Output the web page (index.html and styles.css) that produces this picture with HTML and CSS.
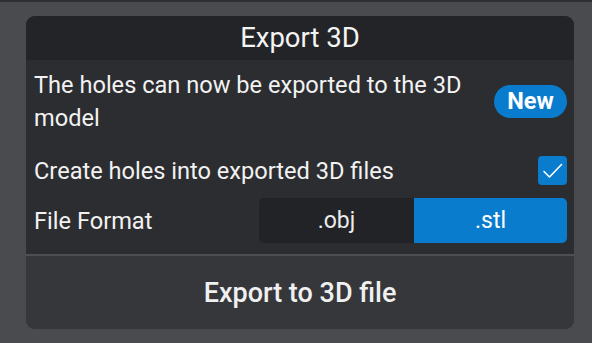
FILE: index.html
```html
<!DOCTYPE html>
<html>
<head>
<meta charset="utf-8">
<link rel="stylesheet" href="styles.css">
</head>
<body>
<div class="screen">
  <div class="dialog">
    <div class="header">Export 3D</div>
    <div class="content">
      <div class="row notice">
        <div class="notice-text">The holes can now be exported to the 3D model</div>
        <span class="badge">New</span>
      </div>
      <div class="row check-row">
        <div class="label">Create holes into exported 3D files</div>
        <span class="checkbox">
          <svg width="29" height="29" viewBox="0 0 29 29"><path d="M6 15.5 L11.5 21 L23.5 8.5" fill="none" stroke="#fff" stroke-width="1.6" stroke-linecap="round" stroke-linejoin="round"/></svg>
        </span>
      </div>
      <div class="row format-row">
        <div class="label">File Format</div>
        <div class="segmented">
          <span class="seg">.obj</span>
          <span class="seg active">.stl</span>
        </div>
      </div>
    </div>
    <div class="footer">Export to 3D file</div>
  </div>
</div>
</body>
</html>
```
FILE: styles.css
```css
html, body {
  margin: 0;
  padding: 0;
}
body {
  width: 592px;
  height: 343px;
  overflow: hidden;
  background: #4a4b4f;
  font-family: Roboto, "Noto Sans", sans-serif;
  color: #f2f2f2;
}
.screen {
  height: 343px;
  padding: 14px 18px 0 26px;
  box-sizing: border-box;
  border-top: 2px solid #2e2f33;
}
.dialog {
  width: 548px;
  height: 313px;
  border-radius: 9px;
  overflow: hidden;
  background: #2c2d31;
  display: flex;
  flex-direction: column;
}
.header {
  height: 44px;
  flex: none;
  background: #232427;
  font-size: 27.5px;
  line-height: 44px;
  text-align: center;
  color: #f4f4f4;
}
.content {
  padding: 0 7px 0 8px;
  display: flex;
  flex-direction: column;
}
.row {
  display: flex;
  align-items: center;
  justify-content: space-between;
}
.notice {
  height: 83px;
}
.notice-text {
  width: 450px;
  font-size: 23.6px;
  line-height: 33px;
}
.badge {
  width: 73px;
  height: 33px;
  border-radius: 17px;
  background: #0a7ccd;
  color: #fff;
  font-weight: 700;
  font-size: 23.5px;
  line-height: 33px;
  text-align: center;
}
.check-row {
  height: 55px;
}
.label {
  font-size: 23.6px;
}
.checkbox {
  width: 29px;
  height: 29px;
  border-radius: 4px;
  background: #0a7ccd;
  display: block;
}
.checkbox svg { display: block; }
.format-row {
  height: 45px;
}
.segmented {
  width: 308px;
  height: 45px;
  display: flex;
  border-radius: 5px;
  overflow: hidden;
  background: #222326;
}
.seg {
  flex: 1;
  text-align: center;
  font-size: 23px;
  line-height: 45px;
  color: #ececec;
}
.seg.active {
  flex: 0 0 153px;
  background: #0a7ccd;
  color: #fff;
}
.footer {
  margin-top: 11px;
  border-top: 2px solid #4d4e53;
  flex: 1;
  background: #36373b;
  display: flex;
  align-items: center;
  justify-content: center;
  font-size: 27px;
  font-weight: 500;
  color: #f0f0f0;
}
```
